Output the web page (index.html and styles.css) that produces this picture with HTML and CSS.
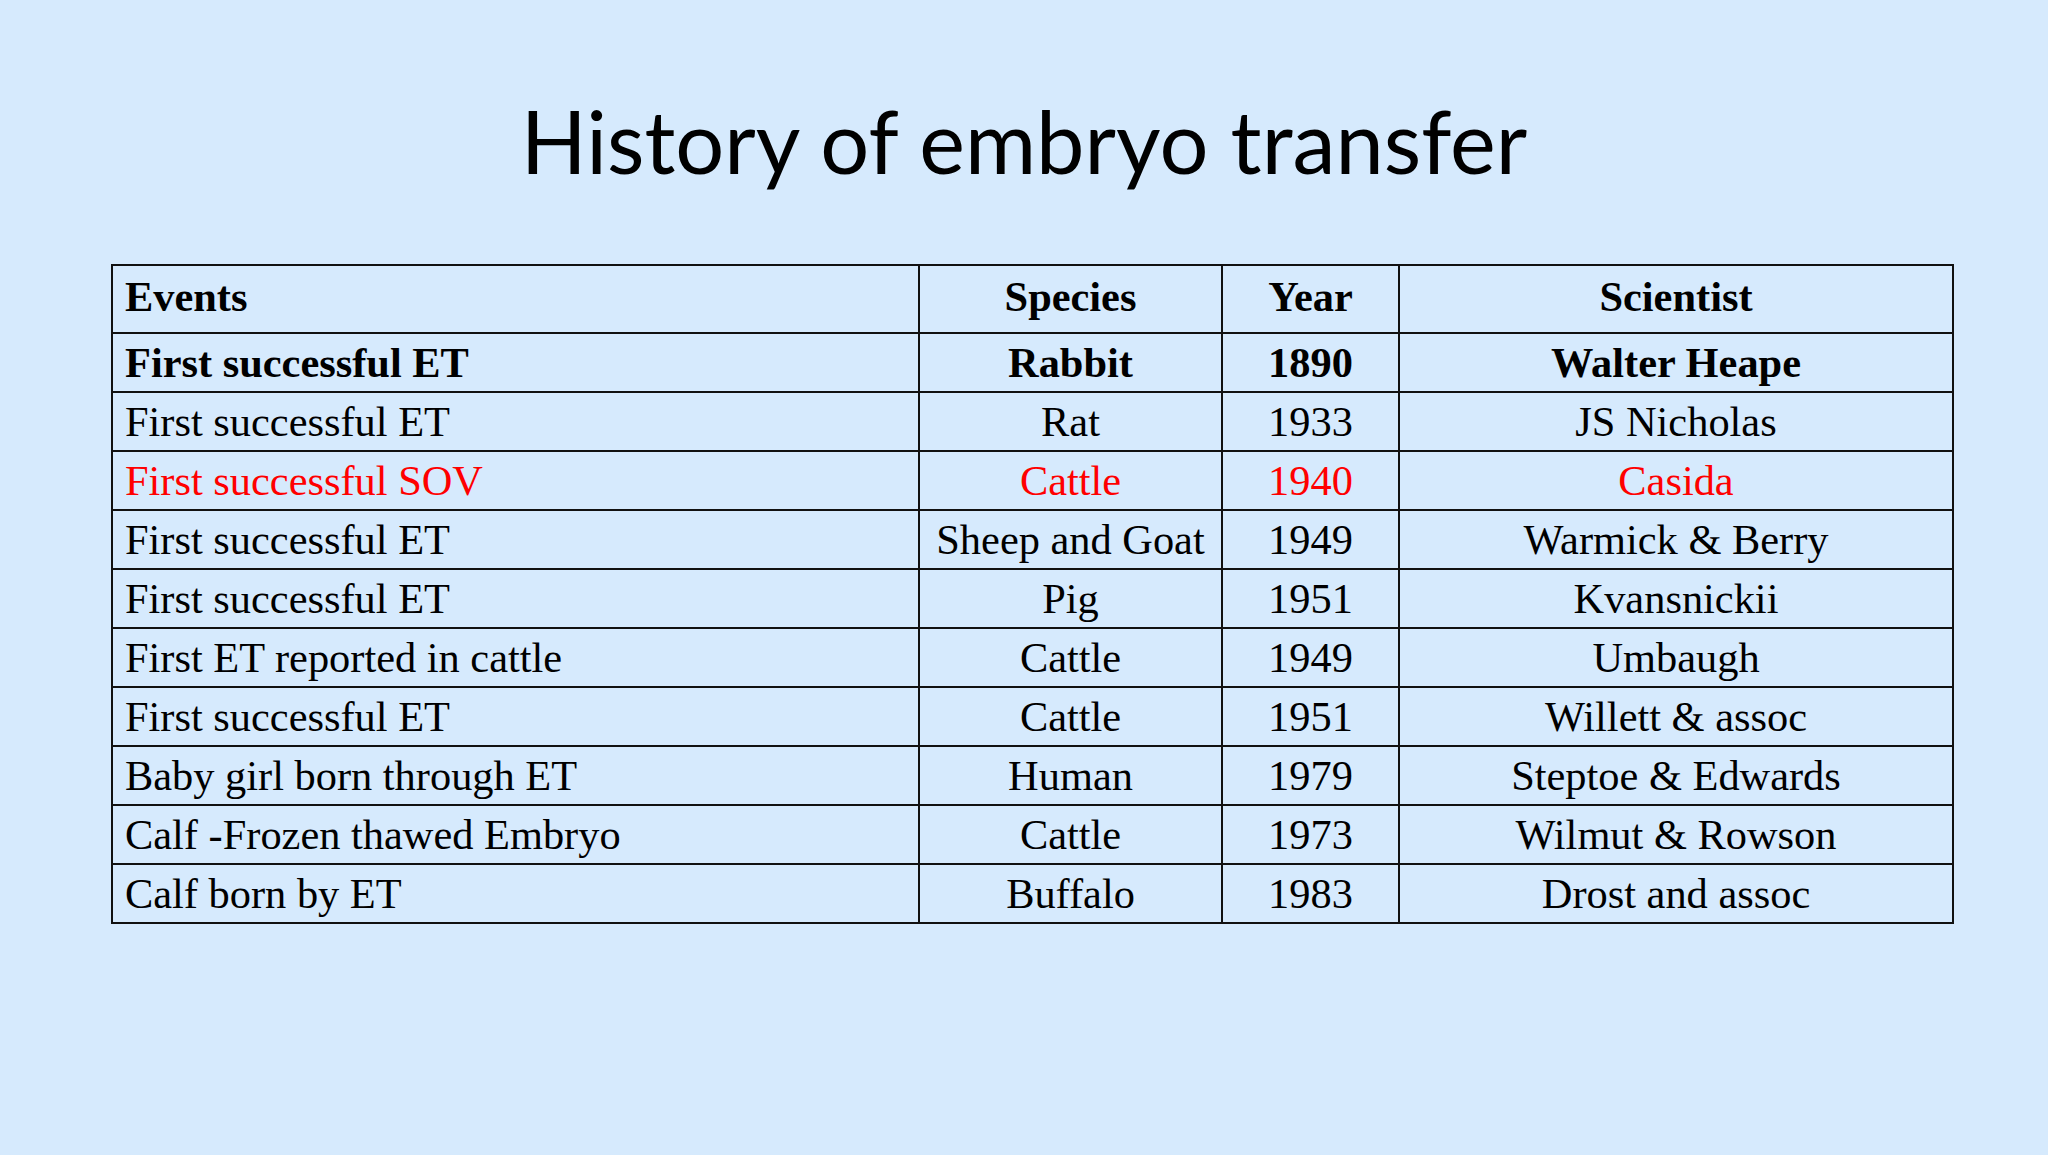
FILE: index.html
```html
<!DOCTYPE html>
<html>
<head>
<meta charset="utf-8">
<link rel="stylesheet" href="styles.css">
</head>
<body>
<div class="slide">
  <h1 class="title">History of embryo transfer</h1>
  <table class="et">
    <colgroup>
      <col class="c-ev"><col class="c-sp"><col class="c-yr"><col class="c-sc">
    </colgroup>
    <tr class="head bold">
      <td class="left">Events</td><td>Species</td><td>Year</td><td>Scientist</td>
    </tr>
    <tr class="bold">
      <td class="left">First successful ET</td><td>Rabbit</td><td>1890</td><td>Walter Heape</td>
    </tr>
    <tr>
      <td class="left">First successful ET</td><td>Rat</td><td>1933</td><td>JS Nicholas</td>
    </tr>
    <tr class="red">
      <td class="left">First successful SOV</td><td>Cattle</td><td>1940</td><td>Casida</td>
    </tr>
    <tr>
      <td class="left">First successful ET</td><td>Sheep and Goat</td><td>1949</td><td>Warmick &amp; Berry</td>
    </tr>
    <tr>
      <td class="left">First successful ET</td><td>Pig</td><td>1951</td><td>Kvansnickii</td>
    </tr>
    <tr>
      <td class="left">First ET reported in cattle</td><td>Cattle</td><td>1949</td><td>Umbaugh</td>
    </tr>
    <tr>
      <td class="left">First successful ET</td><td>Cattle</td><td>1951</td><td>Willett &amp; assoc</td>
    </tr>
    <tr>
      <td class="left">Baby girl born through ET</td><td>Human</td><td>1979</td><td>Steptoe &amp; Edwards</td>
    </tr>
    <tr>
      <td class="left">Calf -Frozen thawed Embryo</td><td>Cattle</td><td>1973</td><td>Wilmut &amp; Rowson</td>
    </tr>
    <tr>
      <td class="left">Calf born by ET</td><td>Buffalo</td><td>1983</td><td>Drost and assoc</td>
    </tr>
  </table>
</div>
</body>
</html>
```

FILE: styles.css
```css
html, body {
  margin: 0;
  padding: 0;
  background: #d6eafd;
}
.slide {
  width: 2048px;
  height: 1155px;
  background: #d6eafd;
  overflow: hidden;
}
.title {
  margin: 0;
  padding-top: 91px;
  height: 109px;
  font-family: Lato, "Open Sans", sans-serif;
  font-weight: 400;
  font-size: 86.5px;
  line-height: 100px;
  text-align: center;
  color: #000;
}
.et {
  margin-top: 64px;
  margin-left: 111px;
  border-collapse: collapse;
  table-layout: fixed;
  width: 1841px;
  font-family: "Liberation Serif", "Times New Roman", serif;
  font-size: 42.4px;
  color: #000;
}
.c-ev { width: 807px; }
.c-sp { width: 303px; }
.c-yr { width: 177px; }
.c-sc { width: 554px; }
.et td {
  border: 2px solid #111;
  padding: 0 12px;
  height: 57px;
  text-align: center;
  vertical-align: middle;
  white-space: nowrap;
  line-height: 48px;
}
.et td.left {
  text-align: left;
}
.et tr.head td {
  height: 62px;
  padding-bottom: 4px;
}
.bold td {
  font-weight: 700;
}
.red td {
  color: #ff0000;
}
```
